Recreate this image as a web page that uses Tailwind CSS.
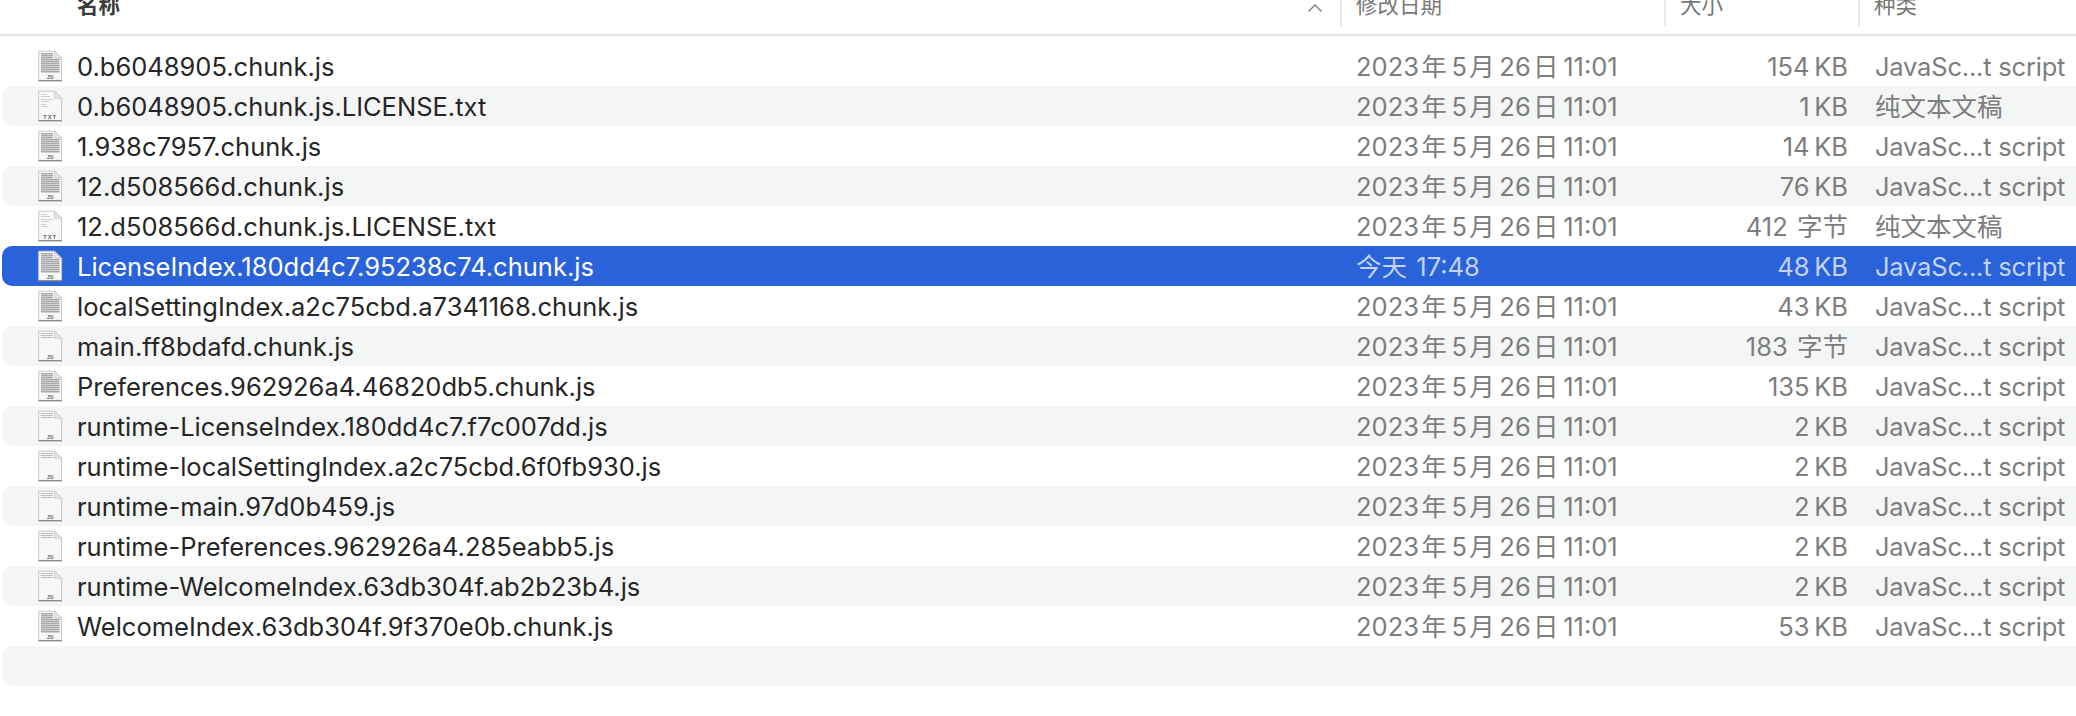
<!DOCTYPE html>
<html>
<head>
<meta charset="utf-8">
<script src="https://cdn.jsdelivr.net/npm/@tailwindcss/browser@4"></script>
</head>
<body class="bg-white overflow-hidden h-[716px] font-['Inter','Noto_Sans_CJK_SC',sans-serif]">
<svg width="0" height="0" class="absolute">
  <defs>
    <g id="page">
      <path d="M.7 1.2H16.5L23.6 8.3V30.4H.7Z" fill="#f8f8f8" stroke="#c8c8c8" stroke-width="1"/>
      <path d="M16.5 1.2V8.3H23.6Z" fill="#e6e6e6" stroke="#c4c4c4" stroke-width=".8"/>
      <path d="M.5 30.7H23.8" stroke="#8a8a8a" stroke-width="1.4"/>
    </g>
    <g id="js">
      <use href="#page"/>
      <path d="M3 3H15V4.4H3ZM3 5H15V6.4H3ZM3 7H15V8.4H3ZM3 9H21.5V10.4H3ZM3 11H21.5V12.4H3ZM3 13H21.5V14.4H3ZM3 15H21.5V16.4H3ZM3 17H21.5V18.4H3ZM3 19H21.5V20.4H3ZM3 21H21.5V22.4H3Z" fill="#a8a8a8"/>
      <text x="12.2" y="28.6" text-anchor="middle" font-size="6" font-weight="700" font-family="Liberation Sans" fill="#666">JS</text>
    </g>
    <g id="blank">
      <use href="#page"/>
      <path d="M3 3H15V4H3ZM3 5H15V6H3ZM3 7H15V8H3Z" fill="#bdbdbd"/>
      <text x="12.2" y="28.6" text-anchor="middle" font-size="6" font-weight="700" font-family="Liberation Sans" fill="#666">JS</text>
    </g>
    <g id="txt">
      <use href="#page"/>
      <path d="M3 4H9V5H3ZM3 6H12V7H3ZM3 9H15V10H3ZM3 11H11V12H3ZM3 14H8V15H3ZM3 16H10V17H3Z" fill="#cfcfcf"/>
      <text x="12.2" y="28.6" text-anchor="middle" font-size="6" font-weight="700" letter-spacing=".8" font-family="Liberation Sans" fill="#666">TXT</text>
    </g>
  </defs>
</svg>

<header class="h-9 border-b-2 border-[#e3e4e4] flex items-start text-[#777] text-[21.5px] overflow-hidden">
  <div class="w-[1340px] shrink-0 pl-[77px] pr-[17px] h-[26px] flex justify-between">
    <span class="font-semibold text-[#3a3a3a] leading-[24px] -mt-[7px]">名称</span>
    <svg class="mt-[3px]" width="16" height="10" viewBox="0 0 16 10" fill="none" stroke="#7a7a7a" stroke-width="1.4"><path d="M1.5 8.5L8 2L14.5 8.5"/></svg>
  </div>
  <div class="w-[324px] shrink-0 h-[26px] border-l-2 border-[#e8e8e8] pl-[14px]"><span class="block leading-[24px] -mt-[7px]">修改日期</span></div>
  <div class="w-[194px] shrink-0 h-[26px] border-l-2 border-[#e8e8e8] pl-[14px]"><span class="block leading-[24px] -mt-[7px]">大小</span></div>
  <div class="flex-1 h-[26px] border-l-2 border-[#e8e8e8] pl-[14px]"><span class="block leading-[24px] -mt-[7px]">种类</span></div>
</header>

<main class="mt-[10px] ml-[2px] text-[25.5px] text-[#262626] leading-[40px]">
  <div class="h-10 flex items-center rounded-l-[10px]">
    <svg class="ml-[36px] w-[25px] h-[32px] shrink-0 blur-[0.4px]" viewBox="0 0 25 32"><use href="#js"/></svg>
    <span class="ml-[14px] w-[1279px] shrink-0 pt-px">0.b6048905.chunk.js</span>
    <span class="w-[340px] shrink-0 pt-px text-[#7d7d7d]">2023&#8202;年&thinsp;5&#8202;月&thinsp;26&#8202;日&thinsp;11:01</span>
    <span class="w-[152px] shrink-0 pt-px text-right text-[#7d7d7d]">154&thinsp;KB</span>
    <span class="ml-[27px] pt-px text-[#7d7d7d] whitespace-nowrap tracking-[-0.2px]">JavaSc...t script</span>
  </div>
  <div class="h-10 flex items-center rounded-l-[10px] bg-[#f4f5f5]">
    <svg class="ml-[36px] w-[25px] h-[32px] shrink-0 blur-[0.4px]" viewBox="0 0 25 32"><use href="#txt"/></svg>
    <span class="ml-[14px] w-[1279px] shrink-0 pt-px">0.b6048905.chunk.js.LICENSE.txt</span>
    <span class="w-[340px] shrink-0 pt-px text-[#7d7d7d]">2023&#8202;年&thinsp;5&#8202;月&thinsp;26&#8202;日&thinsp;11:01</span>
    <span class="w-[152px] shrink-0 pt-px text-right text-[#7d7d7d]">1&thinsp;KB</span>
    <span class="ml-[27px] pt-px text-[#7d7d7d] whitespace-nowrap">纯文本文稿</span>
  </div>
  <div class="h-10 flex items-center rounded-l-[10px]">
    <svg class="ml-[36px] w-[25px] h-[32px] shrink-0 blur-[0.4px]" viewBox="0 0 25 32"><use href="#js"/></svg>
    <span class="ml-[14px] w-[1279px] shrink-0 pt-px">1.938c7957.chunk.js</span>
    <span class="w-[340px] shrink-0 pt-px text-[#7d7d7d]">2023&#8202;年&thinsp;5&#8202;月&thinsp;26&#8202;日&thinsp;11:01</span>
    <span class="w-[152px] shrink-0 pt-px text-right text-[#7d7d7d]">14&thinsp;KB</span>
    <span class="ml-[27px] pt-px text-[#7d7d7d] whitespace-nowrap tracking-[-0.2px]">JavaSc...t script</span>
  </div>
  <div class="h-10 flex items-center rounded-l-[10px] bg-[#f4f5f5]">
    <svg class="ml-[36px] w-[25px] h-[32px] shrink-0 blur-[0.4px]" viewBox="0 0 25 32"><use href="#js"/></svg>
    <span class="ml-[14px] w-[1279px] shrink-0 pt-px">12.d508566d.chunk.js</span>
    <span class="w-[340px] shrink-0 pt-px text-[#7d7d7d]">2023&#8202;年&thinsp;5&#8202;月&thinsp;26&#8202;日&thinsp;11:01</span>
    <span class="w-[152px] shrink-0 pt-px text-right text-[#7d7d7d]">76&thinsp;KB</span>
    <span class="ml-[27px] pt-px text-[#7d7d7d] whitespace-nowrap tracking-[-0.2px]">JavaSc...t script</span>
  </div>
  <div class="h-10 flex items-center rounded-l-[10px]">
    <svg class="ml-[36px] w-[25px] h-[32px] shrink-0 blur-[0.4px]" viewBox="0 0 25 32"><use href="#txt"/></svg>
    <span class="ml-[14px] w-[1279px] shrink-0 pt-px">12.d508566d.chunk.js.LICENSE.txt</span>
    <span class="w-[340px] shrink-0 pt-px text-[#7d7d7d]">2023&#8202;年&thinsp;5&#8202;月&thinsp;26&#8202;日&thinsp;11:01</span>
    <span class="w-[152px] shrink-0 pt-px text-right text-[#7d7d7d]">412&thinsp;&thinsp;字节</span>
    <span class="ml-[27px] pt-px text-[#7d7d7d] whitespace-nowrap">纯文本文稿</span>
  </div>
  <div class="h-10 flex items-center rounded-l-[10px] bg-[#2962d9] text-white">
    <svg class="ml-[36px] w-[25px] h-[32px] shrink-0 blur-[0.4px]" viewBox="0 0 25 32"><use href="#js"/></svg>
    <span class="ml-[14px] w-[1279px] shrink-0 pt-px">LicenseIndex.180dd4c7.95238c74.chunk.js</span>
    <span class="w-[340px] shrink-0 pt-px text-[#c5d4f4]">今天&thinsp;&thinsp;17:48</span>
    <span class="w-[152px] shrink-0 pt-px text-right text-[#c5d4f4]">48&thinsp;KB</span>
    <span class="ml-[27px] pt-px text-[#c5d4f4] whitespace-nowrap tracking-[-0.2px]">JavaSc...t script</span>
  </div>
  <div class="h-10 flex items-center rounded-l-[10px]">
    <svg class="ml-[36px] w-[25px] h-[32px] shrink-0 blur-[0.4px]" viewBox="0 0 25 32"><use href="#js"/></svg>
    <span class="ml-[14px] w-[1279px] shrink-0 pt-px">localSettingIndex.a2c75cbd.a7341168.chunk.js</span>
    <span class="w-[340px] shrink-0 pt-px text-[#7d7d7d]">2023&#8202;年&thinsp;5&#8202;月&thinsp;26&#8202;日&thinsp;11:01</span>
    <span class="w-[152px] shrink-0 pt-px text-right text-[#7d7d7d]">43&thinsp;KB</span>
    <span class="ml-[27px] pt-px text-[#7d7d7d] whitespace-nowrap tracking-[-0.2px]">JavaSc...t script</span>
  </div>
  <div class="h-10 flex items-center rounded-l-[10px] bg-[#f4f5f5]">
    <svg class="ml-[36px] w-[25px] h-[32px] shrink-0 blur-[0.4px]" viewBox="0 0 25 32"><use href="#blank"/></svg>
    <span class="ml-[14px] w-[1279px] shrink-0 pt-px">main.ff8bdafd.chunk.js</span>
    <span class="w-[340px] shrink-0 pt-px text-[#7d7d7d]">2023&#8202;年&thinsp;5&#8202;月&thinsp;26&#8202;日&thinsp;11:01</span>
    <span class="w-[152px] shrink-0 pt-px text-right text-[#7d7d7d]">183&thinsp;&thinsp;字节</span>
    <span class="ml-[27px] pt-px text-[#7d7d7d] whitespace-nowrap tracking-[-0.2px]">JavaSc...t script</span>
  </div>
  <div class="h-10 flex items-center rounded-l-[10px]">
    <svg class="ml-[36px] w-[25px] h-[32px] shrink-0 blur-[0.4px]" viewBox="0 0 25 32"><use href="#js"/></svg>
    <span class="ml-[14px] w-[1279px] shrink-0 pt-px">Preferences.962926a4.46820db5.chunk.js</span>
    <span class="w-[340px] shrink-0 pt-px text-[#7d7d7d]">2023&#8202;年&thinsp;5&#8202;月&thinsp;26&#8202;日&thinsp;11:01</span>
    <span class="w-[152px] shrink-0 pt-px text-right text-[#7d7d7d]">135&thinsp;KB</span>
    <span class="ml-[27px] pt-px text-[#7d7d7d] whitespace-nowrap tracking-[-0.2px]">JavaSc...t script</span>
  </div>
  <div class="h-10 flex items-center rounded-l-[10px] bg-[#f4f5f5]">
    <svg class="ml-[36px] w-[25px] h-[32px] shrink-0 blur-[0.4px]" viewBox="0 0 25 32"><use href="#blank"/></svg>
    <span class="ml-[14px] w-[1279px] shrink-0 pt-px">runtime-LicenseIndex.180dd4c7.f7c007dd.js</span>
    <span class="w-[340px] shrink-0 pt-px text-[#7d7d7d]">2023&#8202;年&thinsp;5&#8202;月&thinsp;26&#8202;日&thinsp;11:01</span>
    <span class="w-[152px] shrink-0 pt-px text-right text-[#7d7d7d]">2&thinsp;KB</span>
    <span class="ml-[27px] pt-px text-[#7d7d7d] whitespace-nowrap tracking-[-0.2px]">JavaSc...t script</span>
  </div>
  <div class="h-10 flex items-center rounded-l-[10px]">
    <svg class="ml-[36px] w-[25px] h-[32px] shrink-0 blur-[0.4px]" viewBox="0 0 25 32"><use href="#blank"/></svg>
    <span class="ml-[14px] w-[1279px] shrink-0 pt-px">runtime-localSettingIndex.a2c75cbd.6f0fb930.js</span>
    <span class="w-[340px] shrink-0 pt-px text-[#7d7d7d]">2023&#8202;年&thinsp;5&#8202;月&thinsp;26&#8202;日&thinsp;11:01</span>
    <span class="w-[152px] shrink-0 pt-px text-right text-[#7d7d7d]">2&thinsp;KB</span>
    <span class="ml-[27px] pt-px text-[#7d7d7d] whitespace-nowrap tracking-[-0.2px]">JavaSc...t script</span>
  </div>
  <div class="h-10 flex items-center rounded-l-[10px] bg-[#f4f5f5]">
    <svg class="ml-[36px] w-[25px] h-[32px] shrink-0 blur-[0.4px]" viewBox="0 0 25 32"><use href="#blank"/></svg>
    <span class="ml-[14px] w-[1279px] shrink-0 pt-px">runtime-main.97d0b459.js</span>
    <span class="w-[340px] shrink-0 pt-px text-[#7d7d7d]">2023&#8202;年&thinsp;5&#8202;月&thinsp;26&#8202;日&thinsp;11:01</span>
    <span class="w-[152px] shrink-0 pt-px text-right text-[#7d7d7d]">2&thinsp;KB</span>
    <span class="ml-[27px] pt-px text-[#7d7d7d] whitespace-nowrap tracking-[-0.2px]">JavaSc...t script</span>
  </div>
  <div class="h-10 flex items-center rounded-l-[10px]">
    <svg class="ml-[36px] w-[25px] h-[32px] shrink-0 blur-[0.4px]" viewBox="0 0 25 32"><use href="#blank"/></svg>
    <span class="ml-[14px] w-[1279px] shrink-0 pt-px">runtime-Preferences.962926a4.285eabb5.js</span>
    <span class="w-[340px] shrink-0 pt-px text-[#7d7d7d]">2023&#8202;年&thinsp;5&#8202;月&thinsp;26&#8202;日&thinsp;11:01</span>
    <span class="w-[152px] shrink-0 pt-px text-right text-[#7d7d7d]">2&thinsp;KB</span>
    <span class="ml-[27px] pt-px text-[#7d7d7d] whitespace-nowrap tracking-[-0.2px]">JavaSc...t script</span>
  </div>
  <div class="h-10 flex items-center rounded-l-[10px] bg-[#f4f5f5]">
    <svg class="ml-[36px] w-[25px] h-[32px] shrink-0 blur-[0.4px]" viewBox="0 0 25 32"><use href="#blank"/></svg>
    <span class="ml-[14px] w-[1279px] shrink-0 pt-px">runtime-WelcomeIndex.63db304f.ab2b23b4.js</span>
    <span class="w-[340px] shrink-0 pt-px text-[#7d7d7d]">2023&#8202;年&thinsp;5&#8202;月&thinsp;26&#8202;日&thinsp;11:01</span>
    <span class="w-[152px] shrink-0 pt-px text-right text-[#7d7d7d]">2&thinsp;KB</span>
    <span class="ml-[27px] pt-px text-[#7d7d7d] whitespace-nowrap tracking-[-0.2px]">JavaSc...t script</span>
  </div>
  <div class="h-10 flex items-center rounded-l-[10px]">
    <svg class="ml-[36px] w-[25px] h-[32px] shrink-0 blur-[0.4px]" viewBox="0 0 25 32"><use href="#js"/></svg>
    <span class="ml-[14px] w-[1279px] shrink-0 pt-px">WelcomeIndex.63db304f.9f370e0b.chunk.js</span>
    <span class="w-[340px] shrink-0 pt-px text-[#7d7d7d]">2023&#8202;年&thinsp;5&#8202;月&thinsp;26&#8202;日&thinsp;11:01</span>
    <span class="w-[152px] shrink-0 pt-px text-right text-[#7d7d7d]">53&thinsp;KB</span>
    <span class="ml-[27px] pt-px text-[#7d7d7d] whitespace-nowrap tracking-[-0.2px]">JavaSc...t script</span>
  </div>
  <div class="h-10 rounded-l-[10px] bg-[#f4f5f5]"></div>
</main>
</body>
</html>
